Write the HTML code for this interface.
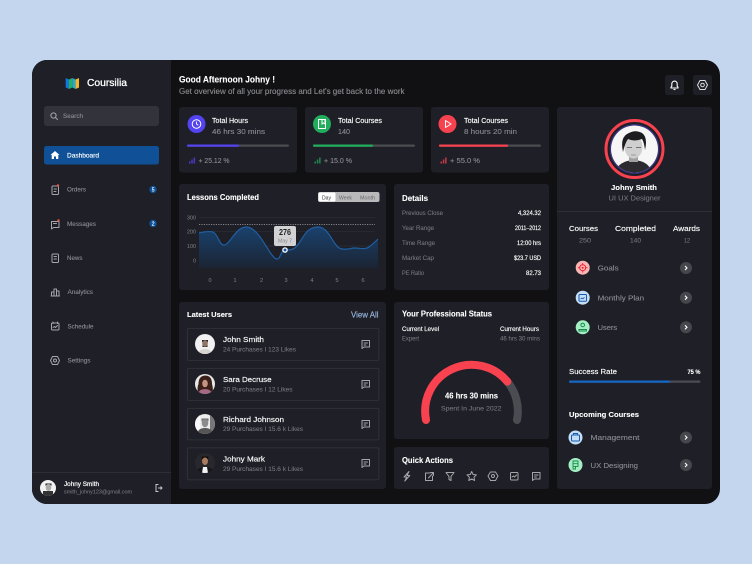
<!DOCTYPE html>
<html lang="en"><head><meta charset="utf-8"><title>Coursilia Dashboard</title>
<style>
html,body{margin:0;padding:0;background:#c3d6ee;width:752px;height:564px;overflow:hidden}
svg{display:block}
text{font-family:"Liberation Sans",sans-serif;fill:#fff;stroke:#fff;stroke-width:.14}
.d{fill:#8d8e93;stroke:#8d8e93;stroke-width:.1}
.m{fill:#77787d;stroke:#77787d;stroke-width:.08}
.b{font-weight:700;stroke-width:.1}
.k{stroke:none}
.i{fill:none;stroke:#a5a6aa;stroke-width:1;stroke-linejoin:round;stroke-linecap:round}
.c{fill:#1e1f27}
.r{fill:none;stroke:#33343b;stroke-width:.8}
</style></head><body>
<svg width="752" height="564" viewBox="0 0 752 564" xmlns="http://www.w3.org/2000/svg">
<defs>
<clipPath id="cw"><rect x="32" y="60" width="688" height="444" rx="15"/></clipPath>
<clipPath id="a1"><circle cx="205" cy="344" r="10"/></clipPath>
<clipPath id="a2"><circle cx="205" cy="384" r="10"/></clipPath>
<clipPath id="a3"><circle cx="205" cy="424" r="10"/></clipPath>
<clipPath id="a4"><circle cx="205" cy="463" r="10"/></clipPath>
<clipPath id="a5"><circle cx="634.5" cy="149" r="23.5"/></clipPath>
<clipPath id="a6"><circle cx="48" cy="488" r="8"/></clipPath>
<linearGradient id="g" x1="0" y1="0" x2="0" y2="1"><stop offset="0" stop-color="#1a426e"/><stop offset="1" stop-color="#1b2433"/></linearGradient>
</defs>
<rect width="752" height="564" fill="#c3d6ee"/>
<g clip-path="url(#cw)">
<rect x="32" y="60" width="688" height="444" fill="#111114"/>
<rect x="32" y="60" width="139" height="444" fill="#1e1f27"/>
<rect x="32" y="472" width="139" height=".7" fill="#34353c"/>
</g>

<!-- Sidebar -->
<path d="M65.700 78l3.300 1.500V89l-3.300-1.500z" fill="#1476e0"/><path d="M69 79.500l3.300-1.500v9.500L69 89z" fill="#23b05f"/><path d="M72.300 78l3.300 1.500V89l-3.300-1.500z" fill="#2aa9c9"/><path d="M75.600 79.500l3.400-1.500v9.500L75.600 89z" fill="#f4b32c"/>
<text x="87" y="86" font-size="10" style="stroke-width:.3" textLength="40" lengthAdjust="spacingAndGlyphs">Coursilia</text>
<rect x="44" y="106" width="115" height="20" rx="3" fill="#32333b"/>
<circle cx="53.500" cy="115.500" r="2.600" class="i"/><path d="M55.500 117.500l2 2" class="i"/>
<text x="63" y="118" font-size="6" class="d" textLength="20" lengthAdjust="spacingAndGlyphs">Search</text>
<rect x="44" y="146" width="115" height="18.500" rx="2.500" fill="#0f5096"/>
<path d="M50.500 155l4.500-4 4.500 4h-1.200v4h-2.300v-2.500h-2V159h-2.300v-4z" fill="#fff"/>
<text x="67" y="157.500" font-size="6" textLength="32" lengthAdjust="spacingAndGlyphs">Dashboard</text>

<rect x="52" y="186" width="6.500" height="8.500" rx="1" class="i"/><path d="M54 189h2.500M54 191.500h2" class="i"/><circle cx="58" cy="185.500" r="1.200" fill="#f0553f"/>
<text x="67" y="191.500" font-size="6" class="d" textLength="19" lengthAdjust="spacingAndGlyphs">Orders</text>
<circle cx="153" cy="189.500" r="3.700" fill="#0f5096"/><text x="151.800" y="191.500" font-size="5">5</text>

<path d="M51.500 221.500h7.500v6h-5.500l-2 1.500z" class="i"/><path d="M53.500 223.500h3" class="i"/><circle cx="58.500" cy="220.500" r="1.200" fill="#f0553f"/>
<text x="67" y="226" font-size="6" class="d" textLength="29" lengthAdjust="spacingAndGlyphs">Messages</text>
<circle cx="153" cy="223.500" r="3.700" fill="#0f5096"/><text x="151.800" y="225.500" font-size="5">2</text>

<rect x="52" y="254" width="6.500" height="8.500" rx="1" class="i"/><path d="M54 256.500h2.500M54 259h2.500" class="i"/>
<text x="67" y="260" font-size="6" class="d" textLength="15.500" lengthAdjust="spacingAndGlyphs">News</text>

<path d="M51.500 296v-4h2.500v4M54 296v-7h2.500v7M56.500 296v-5h2.500v5M51 296h8.500" class="i"/>
<text x="67.500" y="294" font-size="6" class="d" textLength="25.500" lengthAdjust="spacingAndGlyphs">Analytics</text>

<rect x="51.500" y="323" width="7.500" height="7" rx="1" class="i"/><path d="M53 327.500l1.500-1 1 1 2-2M53 322v1.500M57.500 322v1.500" class="i"/>
<text x="67.500" y="328.500" font-size="6" class="d" textLength="26" lengthAdjust="spacingAndGlyphs">Schedule</text>

<circle cx="55" cy="360.500" r="1.500" class="i"/><path d="M52.500 356.500h5l2 4-2 4h-5l-2-4z" class="i"/>
<text x="67.500" y="362.500" font-size="6" class="d" textLength="23" lengthAdjust="spacingAndGlyphs">Settings</text>

<circle cx="48" cy="488" r="8" fill="#f2f2f2"/>
<g clip-path="url(#a6)"><rect x="43" y="491" width="10" height="6" fill="#333"/><ellipse cx="48.500" cy="487.500" rx="2.800" ry="3.500" fill="#aaa"/><path d="M45.500 486q3-4 6 0v-2.500h-6z" fill="#222"/></g>
<text x="64" y="486" font-size="6.500" style="stroke-width:.2" textLength="35" lengthAdjust="spacingAndGlyphs">Johny Smith</text>
<text x="64" y="493.500" font-size="5.500" class="m" textLength="68" lengthAdjust="spacingAndGlyphs">smith_johny123@gmail.com</text>
<path d="M158.500 484.500h-2.500v7h2.500M158 488h4M160.500 486.500l1.500 1.500-1.500 1.500" fill="none" stroke="#c5c5c8" stroke-width="1"/>

<!-- Header -->
<text x="179" y="82.500" font-size="9.500" class="b" textLength="96" lengthAdjust="spacingAndGlyphs">Good Afternoon Johny !</text>
<text x="179" y="94" font-size="8" class="d" textLength="225.500" lengthAdjust="spacingAndGlyphs">Get overview of all your progress and Let's get back to the work</text>
<rect x="665" y="75" width="19" height="20" rx="2.500" fill="#1e1f27"/>
<path d="M671 88v-.8l.8-.9v-2.500a2.700 2.700 0 0 1 5.400 0v2.500l.8.900v.8z" fill="none" stroke="#fff" stroke-width="1.100"/><path d="M673.500 89.500h2" stroke="#fff" stroke-width="1.100"/>
<rect x="693" y="75" width="19" height="20" rx="2.500" fill="#1e1f27"/>
<path d="M700 80.500h5l2.500 4.500-2.500 4.500h-5L697.500 85z" fill="none" stroke="#ddd" stroke-width="1"/><circle cx="702.500" cy="85" r="1.800" fill="none" stroke="#ddd" stroke-width="1"/>

<!-- Stat cards -->
<rect x="179" y="107" width="118" height="65.500" rx="3" class="c"/>
<rect x="305" y="107" width="118" height="65.500" rx="3" class="c"/>
<rect x="431" y="107" width="118" height="65.500" rx="3" class="c"/>
<circle cx="196.500" cy="124" r="9" fill="#5443f0"/><circle cx="196.500" cy="124" r="4.300" fill="none" stroke="#fff" stroke-width="1"/><path d="M196.500 121.500V124l1.800 1.200" fill="none" stroke="#fff" stroke-width=".9"/>
<circle cx="322" cy="124" r="9" fill="#22ad5c"/><path d="M318.500 119.500h7v9h-7zM322 119.500v4.500l1.500-1 1.500 1v-4.500" fill="none" stroke="#fff" stroke-width="1"/>
<circle cx="447.500" cy="124" r="9" fill="#f8424f"/><path d="M445.500 120.500l5.500 3.500-5.500 3.500z" fill="none" stroke="#fff" stroke-width="1" stroke-linejoin="round"/>
<text x="212" y="123" font-size="7" textLength="36" lengthAdjust="spacingAndGlyphs">Total Hours</text>
<text x="212" y="134" font-size="7.500" class="d" textLength="53" lengthAdjust="spacingAndGlyphs">46 hrs 30 mins</text>
<text x="338" y="123" font-size="7" textLength="44" lengthAdjust="spacingAndGlyphs">Total Courses</text>
<text x="338" y="134" font-size="7.500" class="d" textLength="12" lengthAdjust="spacingAndGlyphs">140</text>
<text x="464" y="123" font-size="7" textLength="44" lengthAdjust="spacingAndGlyphs">Total Courses</text>
<text x="464" y="134" font-size="7.500" class="d" textLength="53" lengthAdjust="spacingAndGlyphs">8 hours 20 min</text>
<rect x="187" y="144.500" width="102" height="2.200" rx="1" fill="#4c4d52"/><rect x="187" y="144.500" width="52" height="2.200" rx="1" fill="#5443f0"/>
<rect x="313" y="144.500" width="102" height="2.200" rx="1" fill="#4c4d52"/><rect x="313" y="144.500" width="60" height="2.200" rx="1" fill="#22ad5c"/>
<rect x="439" y="144.500" width="102" height="2.200" rx="1" fill="#4c4d52"/><rect x="439" y="144.500" width="69" height="2.200" rx="1" fill="#f8424f"/>
<path d="M189 163.500v-2h1.500v2zM191.300 163.500v-4h1.500v4zM193.600 163.500v-6h1.500v6z" fill="#4a38c9"/>
<path d="M314.500 163.500v-2h1.500v2zM316.800 163.500v-4h1.500v4zM319.100 163.500v-6h1.500v6z" fill="#1f8a4c"/>
<path d="M440.500 163.500v-2h1.500v2zM442.800 163.500v-4h1.500v4zM445.100 163.500v-6h1.500v6z" fill="#c73a45"/>
<text x="198.500" y="163" font-size="7.500" class="d" textLength="31" lengthAdjust="spacingAndGlyphs">+ 25.12 %</text>
<text x="324" y="163" font-size="7.500" class="d" textLength="28" lengthAdjust="spacingAndGlyphs">+ 15.0 %</text>
<text x="450" y="163" font-size="7.500" class="d" textLength="30" lengthAdjust="spacingAndGlyphs">+ 55.0 %</text>

<!-- Lessons -->
<rect x="179" y="184" width="207" height="106" rx="3" class="c"/>
<text x="187" y="200" font-size="8" class="b" textLength="72" lengthAdjust="spacingAndGlyphs">Lessons Completed</text>
<rect x="318" y="192" width="61.500" height="10" rx="2" fill="#b9b9bc"/><rect x="318.500" y="192.500" width="17" height="9" rx="1.500" fill="#fff"/>
<text x="322" y="199.500" font-size="5.500" class="k" style="fill:#333" textLength="9" lengthAdjust="spacingAndGlyphs">Day</text>
<text x="339" y="199.500" font-size="5.500" class="k" style="fill:#666" textLength="13" lengthAdjust="spacingAndGlyphs">Week</text>
<text x="360" y="199.500" font-size="5.500" class="k" style="fill:#666" textLength="15" lengthAdjust="spacingAndGlyphs">Month</text>
<path d="M199 217.500h176M199 231.500h176M199 246h176M199 260.500h176" stroke="#33343b" stroke-width=".6"/>
<path d="M199 233C203 232 209 231 213 232C218 234 219 245 224 245C230 245 236 226 247 227C258 228 266 248 272 255C275 259 277 260 279 258C281 255 282 250 285 250C290 250 293 250 296 247C303 240 305 227 318 227C330 227 333 248 342 249C348 250 350 248 355 248C360 248 365 250 369 247C373 244 376 241 378 239V268H199Z" fill="url(#g)"/>
<path d="M199 233C203 232 209 231 213 232C218 234 219 245 224 245C230 245 236 226 247 227C258 228 266 248 272 255C275 259 277 260 279 258C281 255 282 250 285 250C290 250 293 250 296 247C303 240 305 227 318 227C330 227 333 248 342 249C348 250 350 248 355 248C360 248 365 250 369 247C373 244 376 241 378 239" fill="none" stroke="#1f5fa3" stroke-width="1.200"/>
<path d="M199 224.500h176" stroke="#a5a6aa" stroke-width=".7" stroke-dasharray="1.200 1.200"/>
<text x="187" y="219.500" font-size="5.500" class="m" textLength="9" lengthAdjust="spacingAndGlyphs">300</text>
<text x="187" y="233.500" font-size="5.500" class="m" textLength="9" lengthAdjust="spacingAndGlyphs">200</text>
<text x="187" y="248" font-size="5.500" class="m" textLength="9" lengthAdjust="spacingAndGlyphs">100</text>
<text x="193" y="262.500" font-size="5.500" class="m">0</text>
<g font-size="5.500"><text x="208.500" y="282" class="m">0</text><text x="233.500" y="282" class="m">1</text><text x="260" y="282" class="m">2</text><text x="284.500" y="282" class="m">3</text><text x="310.500" y="282" class="m">4</text><text x="335.500" y="282" class="m">5</text><text x="361.500" y="282" class="m">6</text></g>
<rect x="274" y="226" width="22" height="20" rx="2" fill="#d2d2d4"/>
<text x="279" y="235" font-size="8" class="b k" style="fill:#222" textLength="12" lengthAdjust="spacingAndGlyphs">276</text>
<text x="278" y="242.500" font-size="5.500" class="k" style="fill:#868686" textLength="14" lengthAdjust="spacingAndGlyphs">May 7</text>
<circle cx="285" cy="250" r="2.800" fill="#fff"/><circle cx="285" cy="250" r="1.500" fill="#1559a8"/>

<!-- Details -->
<rect x="394" y="184" width="155" height="106" rx="3" class="c"/>
<text x="402" y="201" font-size="8" class="b" textLength="26" lengthAdjust="spacingAndGlyphs">Details</text>
<g font-size="6">
<text x="402" y="215" class="m" textLength="41" lengthAdjust="spacingAndGlyphs">Previous Close</text>
<text x="402" y="230" class="m" textLength="32" lengthAdjust="spacingAndGlyphs">Year Range</text>
<text x="402" y="245" class="m" textLength="33" lengthAdjust="spacingAndGlyphs">Time Range</text>
<text x="402" y="260" class="m" textLength="32" lengthAdjust="spacingAndGlyphs">Market Cap</text>
<text x="402" y="275" class="m" textLength="22" lengthAdjust="spacingAndGlyphs">PE Ratio</text>
<text x="518" y="215" textLength="23" lengthAdjust="spacingAndGlyphs">4,324.32</text>
<text x="515" y="230" textLength="26" lengthAdjust="spacingAndGlyphs">2011–2012</text>
<text x="517" y="245" textLength="24" lengthAdjust="spacingAndGlyphs">12:00 hrs</text>
<text x="514" y="260" textLength="27" lengthAdjust="spacingAndGlyphs">$23.7 USD</text>
<text x="526" y="275" textLength="15" lengthAdjust="spacingAndGlyphs">82.73</text>
</g>

<!-- Latest users -->
<rect x="179" y="302" width="207" height="187" rx="3" class="c"/>
<text x="187" y="317" font-size="7.500" class="b" textLength="45" lengthAdjust="spacingAndGlyphs">Latest Users</text>
<text x="351" y="317.500" font-size="8" style="fill:#9ab8dd;stroke:#9ab8dd" textLength="27.500" lengthAdjust="spacingAndGlyphs">View All</text>
<rect x="187.400" y="328.400" width="191.500" height="32" rx="1.500" class="r"/>
<rect x="187.400" y="368.400" width="191.500" height="32" rx="1.500" class="r"/>
<rect x="187.400" y="408.400" width="191.500" height="31.500" rx="1.500" class="r"/>
<rect x="187.400" y="447.800" width="191.500" height="32" rx="1.500" class="r"/>

<circle cx="205" cy="344" r="10" fill="#f1f1f1"/>
<g clip-path="url(#a1)"><path d="M198 354q1-5 7-5t7 5z" fill="#d8d4d0"/><ellipse cx="205" cy="343.500" rx="2.800" ry="3.500" fill="#8f7768"/><path d="M202 342.500q3-4.500 6 0v-2.500h-6zM202.500 345q2.500 3.500 5 0v2h-5z" fill="#2b2624"/></g>

<circle cx="205" cy="384" r="10" fill="#e8e8e8"/>
<g clip-path="url(#a2)"><path d="M198.500 394q-2-6 0-10q0-8 6.500-8.500q7 0 7 8.500q1.500 5 .5 10z" fill="#3b2019"/><ellipse cx="205" cy="383.500" rx="2.800" ry="3.800" fill="#c29683"/><path d="M198 394q1-5 7-5t7 5z" fill="#a46a85"/></g>

<circle cx="205" cy="424" r="10" fill="#ededed"/>
<g clip-path="url(#a3)"><rect x="195" y="414" width="5" height="20" fill="#fafafa"/><rect x="210" y="414" width="5" height="20" fill="#777"/><path d="M197 434q1-6 8-6t8 6z" fill="#555"/><ellipse cx="205" cy="423" rx="3.300" ry="4.300" fill="#8c8c8c"/><path d="M201.500 421.500q3.500-4.500 7 0v-3h-7z" fill="#6b6b6b"/></g>

<circle cx="205" cy="463" r="10" fill="#27272c"/>
<g clip-path="url(#a4)"><path d="M196 473q1-6 9-6t9 6z" fill="#17171a"/><path d="M202 473l1-6h4l1 6z" fill="#f4f4f4"/><ellipse cx="205" cy="461" rx="3" ry="4" fill="#a87a5f"/><path d="M201.800 460q3.200-5 6.400 0v-3.500h-6.400z" fill="#120c09"/></g>

<g font-size="7.500">
<text x="223" y="342" textLength="41" lengthAdjust="spacingAndGlyphs">John Smith</text>
<text x="223" y="382" textLength="48.500" lengthAdjust="spacingAndGlyphs">Sara Decruse</text>
<text x="223" y="422" textLength="61" lengthAdjust="spacingAndGlyphs">Richard Johnson</text>
<text x="223" y="461.500" textLength="42" lengthAdjust="spacingAndGlyphs">Johny Mark</text>
</g>
<g font-size="6.500">
<text x="223" y="351.500" class="m" textLength="73" lengthAdjust="spacingAndGlyphs">24 Purchases I 123 Likes</text>
<text x="223" y="391.500" class="m" textLength="69.500" lengthAdjust="spacingAndGlyphs">20 Purchases I 12 Likes</text>
<text x="223" y="431" class="m" textLength="80" lengthAdjust="spacingAndGlyphs">29 Purchases I 15.6 k Likes</text>
<text x="223" y="471" class="m" textLength="80" lengthAdjust="spacingAndGlyphs">29 Purchases I 15.6 k Likes</text>
</g>
<g class="i">
<path d="M362 340.500h7.500v6.500h-5.500l-2 1.500zM364 343h3.500M364 345h2"/>
<path d="M362 380.500h7.500v6.500h-5.500l-2 1.500zM364 383h3.500M364 385h2"/>
<path d="M362 420.500h7.500v6.500h-5.500l-2 1.500zM364 423h3.500M364 425h2"/>
<path d="M362 459.500h7.500v6.500h-5.500l-2 1.500zM364 462h3.500M364 464h2"/>
</g>

<!-- Professional status -->
<rect x="394" y="302" width="155" height="137" rx="3" class="c"/>
<text x="402" y="316.500" font-size="8" class="b" textLength="90" lengthAdjust="spacingAndGlyphs">Your Professional Status</text>
<text x="402" y="331" font-size="6.500" textLength="37" lengthAdjust="spacingAndGlyphs">Current Level</text>
<text x="402" y="340.500" font-size="6" class="m" textLength="17" lengthAdjust="spacingAndGlyphs">Expert</text>
<text x="500" y="331" font-size="6.500" textLength="39" lengthAdjust="spacingAndGlyphs">Current Hours</text>
<text x="500" y="340.500" font-size="6" class="m" textLength="40" lengthAdjust="spacingAndGlyphs">46 hrs 30 mins</text>
<path d="M507.300 381.600A46.400 46.400 0 0 1 517 420" fill="none" stroke="#4b4c51" stroke-width="8" stroke-linecap="round"/>
<path d="M426 420A46.400 46.400 0 0 1 507.300 381.600" fill="none" stroke="#f8424f" stroke-width="8" stroke-linecap="round"/>
<text x="445" y="398.700" font-size="8" class="b" textLength="53" lengthAdjust="spacingAndGlyphs">46 hrs 30 mins</text>
<text x="441" y="410.500" font-size="6.500" class="m" textLength="60.500" lengthAdjust="spacingAndGlyphs">Spent In June 2022</text>

<!-- Quick actions -->
<rect x="394" y="447" width="155" height="42" rx="3" class="c"/>
<text x="402" y="463" font-size="8" class="b" textLength="51" lengthAdjust="spacingAndGlyphs">Quick Actions</text>
<g class="i">
<path d="M409 471.500l-5 5.500h2.800l-2 4 5-5.500H407z"/>
<path d="M430 473h-4.500v7.500h7V476M428.500 478l4.500-5M430.500 472.500h3v3"/>
<path d="M446 472.500h8l-3 4v4l-2-1v-3z"/>
<path d="M471.700 471.500l1.400 3 3.300.4-2.400 2.300.6 3.300-2.900-1.600-2.900 1.600.6-3.300-2.400-2.300 3.300-.4z"/>
<path d="M490.500 472h5l2.500 4-2.500 4.500h-5L488 476z"/><circle cx="493" cy="476" r="1.500"/>
<rect x="510.500" y="472.500" width="7.500" height="7.500" rx="1"/><path d="M512 477l1.500-1 1 1 2-2"/>
<path d="M532.500 472.500h7.500v6.500h-5.500l-2 1.500zM534.500 475h3.500M534.500 477h2"/>
</g>

<!-- Right profile -->
<rect x="557" y="107" width="155" height="382" rx="3" class="c"/>
<circle cx="634.500" cy="149" r="28.500" fill="none" stroke="#f8424f" stroke-width="3"/>
<circle cx="634.500" cy="149" r="24.200" fill="none" stroke="#3e3399" stroke-width="1"/>
<circle cx="634.500" cy="149" r="23.500" fill="#f6f6f6"/>
<g clip-path="url(#a5)">
<path d="M615 174q2-13 19-14q16 1 18 14z" fill="#2b2b30"/>
<rect x="629" y="154" width="9" height="8" fill="#a0a0a0"/>
<ellipse cx="633.500" cy="147" rx="9" ry="11.500" fill="#cfcfcf"/>
<path d="M623 152q-3-14 4-18q8-5 15-1q6 4 3 17q-1-8-3-11q-8 3-14 0q-3 4-5 13z" fill="#1d1d1f"/>
<path d="M627 147.500h5M636 147.500h5" stroke="#555" stroke-width=".8"/>
<path d="M631 155h5" stroke="#666" stroke-width=".6"/>
</g>
<text x="611" y="190" font-size="7.500" class="b" textLength="46" lengthAdjust="spacingAndGlyphs">Johny Smith</text>
<text x="608.500" y="200.500" font-size="7" class="m" textLength="52" lengthAdjust="spacingAndGlyphs">UI UX Designer</text>
<rect x="557" y="211" width="155" height=".7" fill="#34353c"/>
<g font-size="7.500">
<text x="569" y="231" textLength="29" lengthAdjust="spacingAndGlyphs">Courses</text>
<text x="615" y="231" textLength="41" lengthAdjust="spacingAndGlyphs">Completed</text>
<text x="673" y="231" textLength="27" lengthAdjust="spacingAndGlyphs">Awards</text>
</g>
<g font-size="6.500">
<text x="579" y="242.500" class="m" textLength="12" lengthAdjust="spacingAndGlyphs">250</text>
<text x="630" y="242.500" class="m" textLength="11" lengthAdjust="spacingAndGlyphs">140</text>
<text x="684" y="242.500" class="m" textLength="6" lengthAdjust="spacingAndGlyphs">12</text>
</g>

<circle cx="582.700" cy="267.700" r="7" fill="#f9b4b4"/><circle cx="582.700" cy="267.700" r="3" fill="none" stroke="#e8202c" stroke-width="1"/><circle cx="582.700" cy="267.700" r="1" fill="#e8202c"/><path d="M582.700 263v1.500M582.700 271v1.500M578 267.700h1.500M586 267.700h1.500" stroke="#e8202c" stroke-width=".8"/>
<circle cx="582.700" cy="297.700" r="7" fill="#c5def7"/><rect x="579" y="294.500" width="7.500" height="6.800" rx="1" fill="none" stroke="#1559a8" stroke-width="1"/><path d="M580.500 299l1.500-1 1 .8 1.500-1.500" fill="none" stroke="#1559a8" stroke-width=".8"/>
<circle cx="582.700" cy="327.300" r="7" fill="#a5eec4"/><circle cx="582.700" cy="325" r="1.800" fill="none" stroke="#14894a" stroke-width="1"/><path d="M579 331v-1.500h7.400v1.500z" fill="none" stroke="#14894a" stroke-width="1"/>
<g font-size="7.500">
<text x="597.600" y="270.300" class="d" textLength="21" lengthAdjust="spacingAndGlyphs">Goals</text>
<text x="597.600" y="300.300" class="d" textLength="46.500" lengthAdjust="spacingAndGlyphs">Monthly Plan</text>
<text x="597.600" y="330" class="d" textLength="19.500" lengthAdjust="spacingAndGlyphs">Users</text>
<text x="590.500" y="440" class="d" textLength="49" lengthAdjust="spacingAndGlyphs">Management</text>
<text x="590.500" y="468" class="d" textLength="47.500" lengthAdjust="spacingAndGlyphs">UX Designing</text>
</g>
<g fill="#46474c"><circle cx="686" cy="268" r="6"/><circle cx="686" cy="297.700" r="6"/><circle cx="686" cy="327.300" r="6"/><circle cx="686" cy="437.500" r="6"/><circle cx="686" cy="465" r="6"/></g>
<g fill="none" stroke="#fff" stroke-width="1.100"><path d="M685 266l2 2-2 2M685 295.700l2 2-2 2M685 325.300l2 2-2 2M685 435.500l2 2-2 2M685 463l2 2-2 2"/></g>

<text x="569" y="374" font-size="7.500" textLength="48" lengthAdjust="spacingAndGlyphs">Success Rate</text>
<text x="687.500" y="374" font-size="6" class="b" textLength="13" lengthAdjust="spacingAndGlyphs">75 %</text>
<rect x="569" y="380.500" width="131.500" height="2.200" rx="1" fill="#4c4d52"/><rect x="569" y="380.500" width="101" height="2.200" rx="1" fill="#1565c5"/>
<text x="569" y="417" font-size="7.500" class="b" textLength="70" lengthAdjust="spacingAndGlyphs">Upcoming Courses</text>

<circle cx="575.500" cy="437.500" r="7" fill="#c5def7"/><rect x="571.500" y="435" width="8" height="6" rx="1" fill="none" stroke="#1559a8" stroke-width="1"/><path d="M573.500 435v-1.500h4V435" fill="none" stroke="#1559a8" stroke-width=".9"/>
<circle cx="575.500" cy="465" r="7" fill="#a5eec4"/><path d="M573 461h5v2.700h-5zM573 463.700h5v2.700h-5zM573 466.400h2.500V469H573z" fill="none" stroke="#14894a" stroke-width=".9"/>
</svg>
</body></html>
